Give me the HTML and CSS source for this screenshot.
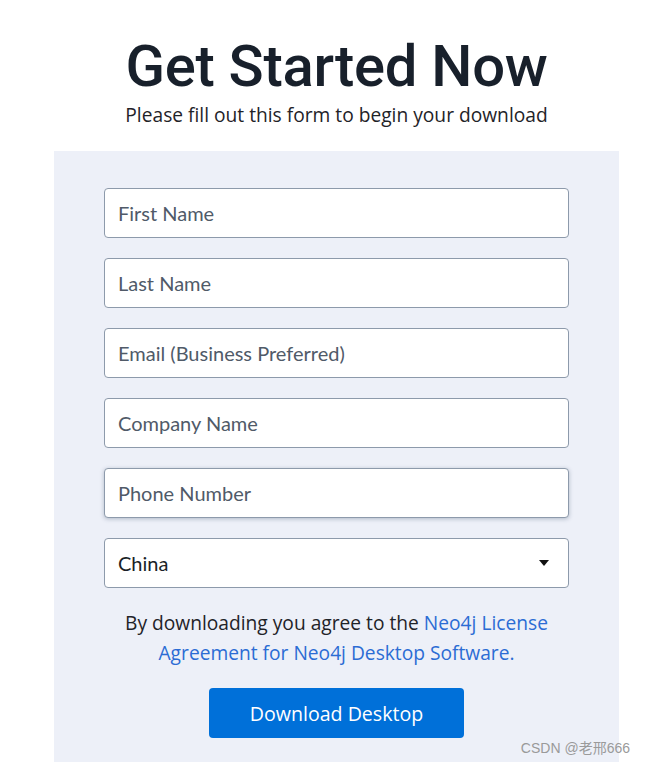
FILE: index.html
```html
<!DOCTYPE html>
<html>
<head>
	<meta http-equiv="Content-Type" content="text/html; charset=UTF-8">
	<meta name="viewport" content="width=device-width, initial-scale=1">
	<title>Get Started Now</title>
	<link rel="stylesheet" href="styles.css">
</head>
<body>
	<div id="wrapper">
		<h1 class="title">Get Started Now</h1>
		<p class="subtitle">Please fill out this form to begin your download</p>
		<div class="panel">
			<form name="dlform" class="dlform" autocomplete="off">
				<input type="text" class="input_text" placeholder="First Name">
				<input type="text" class="input_text" placeholder="Last Name">
				<input type="text" class="input_text" placeholder="Email (Business Preferred)">
				<input type="text" class="input_text" placeholder="Company Name">
				<input type="text" class="input_text focused" placeholder="Phone Number">
				<div class="select_box">
					<span class="select_value">China</span>
					<span class="caret"></span>
				</div>
				<p class="terms">By downloading you agree to the <a href="#">Neo4j License Agreement for Neo4j Desktop Software.</a></p>
				<button type="button" class="btn">Download Desktop</button>
			</form>
		</div>
	</div>
	<div class="watermark">CSDN @老邢666</div>
</body>
</html>
```

FILE: styles.css
```css
body {
	margin: 0;
	font-family: "Open Sans", "Lato", sans-serif;
	background: #fff;
	color: #1a1f27;
}

#wrapper {
	display: flex;
	flex-direction: column;
	align-items: center;
	padding-left: 28px;
}

.title {
	margin: 30px 0 0 0;
	font-family: "Roboto", sans-serif;
	font-weight: 500;
	font-size: 58px;
	line-height: 72px;
	letter-spacing: -0.3px;
	color: #18202b;
}

.subtitle {
	margin: 0 0 23px 0;
	font-family: "Open Sans", sans-serif;
	font-size: 19.2px;
	line-height: 26px;
	color: #1f2328;
}

.panel {
	width: 565px;
	height: 620px;
	background: #edf0f8;
	box-sizing: border-box;
	padding: 37px 50px 0 50px;
}

.dlform {
	display: flex;
	flex-direction: column;
	gap: 20px;
}

.input_text,
.select_box {
	font-family: "Lato", sans-serif;
	height: 50px;
	padding: 0 13px;
	border: solid 1px #8d9aab;
	border-radius: 4px;
	font-size: 20px;
	background: #fff;
	box-sizing: border-box;
	width: 100%;
	outline: none;
}

.input_text::placeholder {
	color: #505a68;
}

.focused {
	box-shadow: 0 1px 4px rgba(60, 80, 110, 0.35);
}

.select_box {
	display: flex;
	align-items: center;
	justify-content: space-between;
	color: #1a1f27;
}

.caret {
	width: 0;
	height: 0;
	margin-right: 6px;
	border-left: 5px solid transparent;
	border-right: 5px solid transparent;
	border-top: 6px solid #111;
}

.terms {
	margin: 0;
	padding: 0 6px;
	text-align: center;
	font-family: "Open Sans", sans-serif;
	font-size: 19.2px;
	line-height: 30px;
	color: #1f2328;
}

.terms a {
	color: #2b6cd4;
	text-decoration: none;
}

.btn {
	align-self: center;
	width: 255px;
	height: 50px;
	border: none;
	border-radius: 4px;
	background: #0070d9;
	color: #fff;
	font-family: "Open Sans", sans-serif;
	font-size: 19.6px;
	cursor: pointer;
}

.watermark {
	position: absolute;
	right: 15px;
	top: 737px;
	font-family: "Liberation Sans", "Noto Sans CJK SC", sans-serif;
	font-size: 14px;
	color: #9a9a9a;
}
```
